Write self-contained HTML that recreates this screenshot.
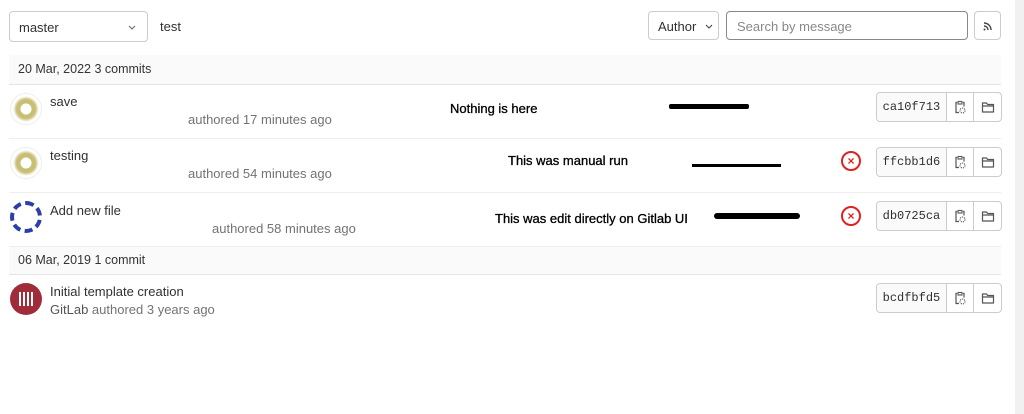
<!DOCTYPE html><html><head><style>
body{margin:0;width:1024px;height:414px;background:#fff;font-family:"Liberation Sans",sans-serif;color:#303030;position:relative;overflow:hidden;font-size:13px}
.a{position:absolute}
.box{position:absolute;border:1px solid #ccc;border-radius:4px;background:#fff;box-sizing:border-box}
.hdr{position:absolute;left:9px;width:992px;background:#fafafa;border-bottom:1px solid #e5e5e5;box-sizing:border-box;padding-left:9px;font-size:12.5px;color:#333}
.row{position:absolute;left:9px;width:992px;border-bottom:1px solid #eee;box-sizing:border-box}
.t{position:absolute;left:41px;font-size:13px;color:#303030}
.s{position:absolute;font-size:13px;color:#737373}
.av{position:absolute;left:1px;width:32px;height:32px;border-radius:50%;border:1px solid #eee;box-sizing:border-box;overflow:hidden}
.sha{position:absolute;left:867px;width:126px;height:30px;border:1px solid #ccc;border-radius:4px;box-sizing:border-box;display:flex;background:#fff}
.sha .h{width:70px;background:#fafafa;font-family:"Liberation Mono",monospace;font-size:12px;line-height:28px;text-align:center;border-right:1px solid #ccc;border-radius:4px 0 0 4px}
.sha .b{width:27px;border-right:1px solid #ccc;display:flex;align-items:center;justify-content:center}
.sha .b:last-child{border:none}
.note{position:absolute;font-size:13px;color:#000;-webkit-text-stroke:0.3px #000}
.x{position:absolute;left:832px;width:20px;height:20px;border:2px solid #d22;border-radius:50%;box-sizing:border-box;color:#d22;font-size:12px;font-weight:bold;line-height:16px;text-align:center}
</style></head><body>
<svg width="0" height="0" style="position:absolute"><defs>
<symbol id="cl" viewBox="0 0 14 14"><path d="M4 2.5H3v10h3M10 2.5h1v4" fill="none" stroke="#555" stroke-width="1.2"/><rect x="5" y="1.5" width="4" height="2.5" fill="none" stroke="#555" stroke-width="1.1"/><circle cx="9.5" cy="10.5" r="2.5" fill="none" stroke="#555" stroke-width="1.1" stroke-dasharray="1.2 1"/></symbol>
<symbol id="fo" viewBox="0 0 14 14"><path d="M1.5 3h4l1.2 1.5h5.8v7.5h-11z M1.5 6h11" fill="none" stroke="#555" stroke-width="1.2" stroke-linejoin="round"/></symbol>
</defs></svg>
<div class="a" style="left:1015px;top:0;width:9px;height:414px;background:#f1f1f1"></div>
<div class="box" style="left:9px;top:11px;width:139px;height:31px;padding:8px 9px;font-size:13px">master<svg class="a" style="right:11px;top:13px" width="8" height="5" viewBox="0 0 8 5"><path d="M1 1l3 3 3-3" fill="none" stroke="#666" stroke-width="1.1"/></svg></div>
<div class="a" style="left:160px;top:19px">test</div>
<div class="box" style="left:648px;top:11px;width:71px;height:29px;padding:7px 9px">Author<svg class="a" style="left:56px;top:12px" width="8" height="5" viewBox="0 0 8 5"><path d="M1 1l3 3 3-3" fill="none" stroke="#444" stroke-width="1.1"/></svg></div>
<div class="box" style="left:726px;top:11px;width:242px;height:29px;border-color:#888;padding:7px 10px;color:#888">Search by message</div>
<div class="box" style="left:974px;top:11px;width:27px;height:29px"><svg class="a" style="left:7px;top:8px" width="12" height="12" viewBox="0 0 12 12" fill="none" stroke="#444" stroke-width="1.4"><path d="M2 3a7 7 0 0 1 7 7M2 6a4 4 0 0 1 4 4"/><circle cx="2.5" cy="9.5" r="1" fill="#444" stroke="none"/></svg></div>

<div class="hdr" style="top:55px;height:30px;line-height:29px">20 Mar, 2022 3 commits</div>
<div class="row" style="top:85px;height:54px">
<div class="av" style="top:8px;background:radial-gradient(circle,#fff 25%,#c9bf74 27%,#c9bf74 45%,#fff 60%)"></div>
<div class="t" style="top:9px">save</div><div class="s" style="left:179px;top:27px">authored 17 minutes ago</div>
<div class="note" style="left:441px;top:16px">Nothing is here</div>
<div class="a" style="left:660px;top:19px;width:80px;height:5px;background:#000;border-radius:2px"></div>
<div class="sha" style="top:7px"><div class="h">ca10f713</div><div class="b"><svg width="14" height="14"><use href="#cl"/></svg></div><div class="b"><svg width="14" height="14"><use href="#fo"/></svg></div></div></div>
<div class="row" style="top:139px;height:54px">
<div class="av" style="top:8px;background:radial-gradient(circle,#fff 25%,#c9bf74 27%,#c9bf74 45%,#fff 60%)"></div>
<div class="t" style="top:9px">testing</div><div class="s" style="left:179px;top:27px">authored 54 minutes ago</div>
<div class="note" style="left:499px;top:14px">This was manual run</div>
<div class="a" style="left:683px;top:25px;width:89px;height:3px;background:#000"></div>
<div class="x" style="top:12px">×</div>
<div class="sha" style="top:8px"><div class="h">ffcbb1d6</div><div class="b"><svg width="14" height="14"><use href="#cl"/></svg></div><div class="b"><svg width="14" height="14"><use href="#fo"/></svg></div></div></div>
<div class="row" style="top:193px;height:54px">
<div class="av" style="top:8px;border:4px dashed #2a3fa8"></div>
<div class="t" style="top:10px">Add new file</div><div class="s" style="left:203px;top:28px">authored 58 minutes ago</div>
<div class="note" style="left:486px;top:18px">This was edit directly on Gitlab UI</div>
<div class="a" style="left:705px;top:20px;width:86px;height:6px;background:#000;border-radius:3px"></div>
<div class="x" style="top:13px">×</div>
<div class="sha" style="top:8px"><div class="h">db0725ca</div><div class="b"><svg width="14" height="14"><use href="#cl"/></svg></div><div class="b"><svg width="14" height="14"><use href="#fo"/></svg></div></div></div>
<div class="hdr" style="top:247px;height:28px;line-height:27px">06 Mar, 2019 1 commit</div>
<div class="row" style="top:275px;height:52px;border:none">
<div class="av" style="top:8px;background:#a02c3a;border:none"><div class="a" style="left:9px;top:9px;width:14px;height:14px;background:repeating-linear-gradient(90deg,#fff 0 2px,#a02c3a 2px 4px)"></div></div>
<div class="t" style="top:9px">Initial template creation</div><div class="s" style="left:41px;top:27px"><span style="color:#555">GitLab</span> authored 3 years ago</div>
<div class="sha" style="top:8px"><div class="h">bcdfbfd5</div><div class="b"><svg width="14" height="14"><use href="#cl"/></svg></div><div class="b"><svg width="14" height="14"><use href="#fo"/></svg></div></div></div>
</body></html>
